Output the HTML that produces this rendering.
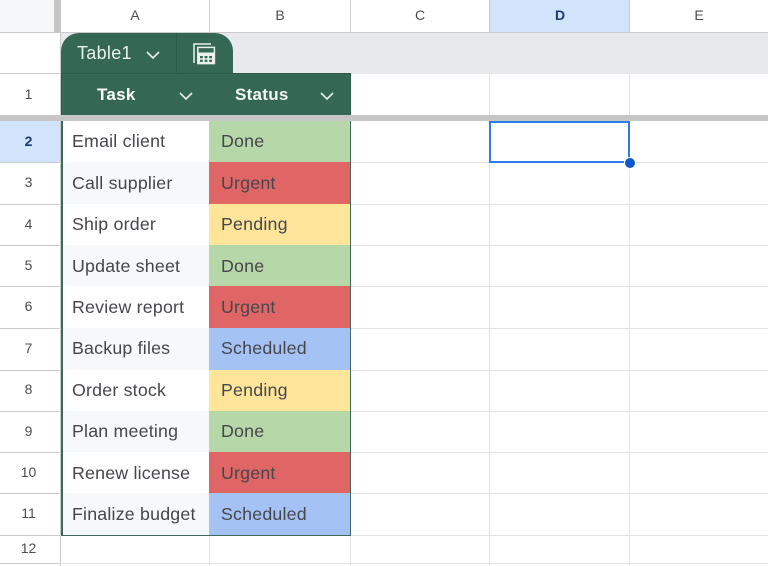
<!DOCTYPE html>
<html><head><meta charset="utf-8">
<style>
html,body{margin:0;padding:0;background:#fff}
#p{position:relative;width:768px;height:566px;overflow:hidden;background:#fff;font-family:"Liberation Sans",sans-serif;color:#444;filter:blur(.3px)}
#p div{position:absolute;box-sizing:border-box}
.t{white-space:nowrap;font-size:17.8px;letter-spacing:.2px;line-height:20px;color:#46464c;margin-top:-1px}
.ch{top:7px;width:40px;text-align:center;font-size:14px;line-height:16px;color:#4d4d4d}
.rn{left:0;width:57px;text-align:center;font-size:14px;line-height:16px;color:#4d4d4d;margin-top:-1px}
.h{height:1px;left:0;width:768px;background:#e2e3e3}
.hg{height:1px;left:0;width:60px;background:#c9cacb}
.v{width:1px;background:#e2e3e3}
.c{left:209px;width:141px}
.a{left:62px;width:147px}
.b{font-weight:bold;font-size:17px;letter-spacing:.27px;margin-top:0}
</style></head><body><div id="p">
<div style="left:0;top:0;width:54px;height:32px;background:#f6f7f8"></div>
<div style="left:54px;top:0;width:7px;height:32px;background:#c6c6c6"></div>
<div style="left:490px;top:0;width:139px;height:32px;background:#d2e3fc"></div>
<div style="left:0;top:32px;width:768px;height:1px;background:#c9cacb"></div>
<div class="v" style="left:209px;top:0;height:32px;background:#d0d1d2"></div>
<div class="v" style="left:350px;top:0;height:32px;background:#d0d1d2"></div>
<div class="v" style="left:489px;top:0;height:32px;background:#c6c8cc"></div>
<div class="v" style="left:629px;top:0;height:32px;background:#c6c8cc"></div>
<div class="ch" style="left:115px">A</div>
<div class="ch" style="left:260px">B</div>
<div class="ch" style="left:400px">C</div>
<div class="ch" style="left:540px;color:#1f3a70;font-weight:bold">D</div>
<div class="ch" style="left:679px">E</div>

<div style="left:61px;top:33px;width:707px;height:41px;background:#e8e9ec"></div>
<div class="v" style="left:60px;top:33px;height:533px;background:#c9cacb"></div>
<div class="hg" style="top:73px"></div>

<div class="v" style="left:350px;top:74px;height:492px"></div>
<div class="v" style="left:489px;top:74px;height:492px"></div>
<div class="v" style="left:629px;top:74px;height:492px"></div>
<div class="v" style="left:209px;top:535px;height:31px"></div>

<div class="h" style="top:162px"></div><div class="h" style="top:203.5px"></div><div class="h" style="top:244.5px"></div>
<div class="h" style="top:286px"></div><div class="h" style="top:327.5px"></div><div class="h" style="top:369.5px"></div>
<div class="h" style="top:410.5px"></div><div class="h" style="top:452px"></div><div class="h" style="top:493px"></div>
<div class="h" style="top:535px"></div><div class="h" style="top:563px"></div>
<div class="hg" style="top:162px"></div><div class="hg" style="top:203.5px"></div><div class="hg" style="top:244.5px"></div>
<div class="hg" style="top:286px"></div><div class="hg" style="top:327.5px"></div><div class="hg" style="top:369.5px"></div>
<div class="hg" style="top:410.5px"></div><div class="hg" style="top:452px"></div><div class="hg" style="top:493px"></div>
<div class="hg" style="top:535px"></div><div class="hg" style="top:563px"></div>

<div style="left:0;top:121px;width:60px;height:41px;background:#d2e3fc"></div>

<div style="left:61px;top:33px;width:172px;height:41px;background:#356854;border-radius:18px 18px 0 0"></div>
<div style="left:176px;top:33px;width:1px;height:41px;background:#2c5a47"></div>
<div class="t" style="left:77px;top:43px;color:#e9f0ed;font-size:18px;letter-spacing:.3px;margin-top:0">Table1</div>
<svg style="position:absolute;left:145px;top:50px" width="16" height="10" viewBox="0 0 16 10"><path d="M2 2l6 6 6-6" fill="none" stroke="#e9f0ed" stroke-width="1.6"/></svg>
<svg style="position:absolute;left:192px;top:42px" width="26" height="24" viewBox="0 0 26 24"><path d="M2 21V2h17" fill="none" stroke="#e9f0ed" stroke-width="1.5"/><rect x="5.8" y="5.4" width="16.6" height="16.2" fill="none" stroke="#e9f0ed" stroke-width="1.5"/><rect x="6" y="10.5" width="16" height="11" fill="#e9f0ed"/><path d="M8 14h2.8v2.2h-2.8zM12.6 14h2.8v2.2h-2.8zM17.2 14h2.8v2.2h-2.8zM8 17.7h2.8v2.2h-2.8zM12.6 17.7h2.8v2.2h-2.8zM17.2 17.7h2.8v2.2h-2.8z" fill="#356854"/></svg>

<div style="left:61px;top:73px;width:290px;height:43px;background:#356854;border:1px solid #2c5a47"></div>
<div class="t b" style="left:97px;top:85px;color:#fff">Task</div>
<div class="t b" style="left:235px;top:85px;color:#f2f6f4">Status</div>
<svg style="position:absolute;left:178px;top:91px" width="16" height="10" viewBox="0 0 16 10"><path d="M2 2l6 6 6-6" fill="none" stroke="#e9f0ed" stroke-width="1.6"/></svg>
<svg style="position:absolute;left:319px;top:91px" width="16" height="10" viewBox="0 0 16 10"><path d="M2 2l6 6 6-6" fill="none" stroke="#e9f0ed" stroke-width="1.6"/></svg>

<div style="left:0;top:115px;width:768px;height:6px;background:#c6c6c6"></div>

<div class="a" style="top:121px;height:41px;background:#fff"></div>
<div class="a" style="top:162px;height:42px;background:#f6f8f9"></div>
<div class="a" style="top:204px;height:41px;background:#fff"></div>
<div class="a" style="top:245px;height:41px;background:#f6f8f9"></div>
<div class="a" style="top:286px;height:42px;background:#fff"></div>
<div class="a" style="top:328px;height:42px;background:#f6f8f9"></div>
<div class="a" style="top:370px;height:41px;background:#fff"></div>
<div class="a" style="top:411px;height:41px;background:#f6f8f9"></div>
<div class="a" style="top:452px;height:41px;background:#fff"></div>
<div class="a" style="top:493px;height:42px;background:#f6f8f9"></div>

<div class="c" style="top:121px;height:41px;background:#b6d7a8"></div>
<div class="c" style="top:162px;height:42px;background:#e06666"></div>
<div class="c" style="top:204px;height:41px;background:#ffe599"></div>
<div class="c" style="top:245px;height:41px;background:#b6d7a8"></div>
<div class="c" style="top:286px;height:42px;background:#e06666"></div>
<div class="c" style="top:328px;height:42px;background:#a4c2f4"></div>
<div class="c" style="top:370px;height:41px;background:#ffe599"></div>
<div class="c" style="top:411px;height:41px;background:#b6d7a8"></div>
<div class="c" style="top:452px;height:41px;background:#e06666"></div>
<div class="c" style="top:493px;height:42px;background:#a4c2f4"></div>

<div style="left:61px;top:121px;width:290px;height:415px;border:1px solid #3d6a57;border-top:0;border-left-width:2px;border-right-width:1.5px"></div>

<div class="rn" style="top:87px">1</div>
<div class="rn" style="top:134px;color:#1f3a70;font-weight:bold">2</div>
<div class="rn" style="top:175px">3</div>
<div class="rn" style="top:217px">4</div>
<div class="rn" style="top:258px">5</div>
<div class="rn" style="top:299px">6</div>
<div class="rn" style="top:341px">7</div>
<div class="rn" style="top:382px">8</div>
<div class="rn" style="top:424px">9</div>
<div class="rn" style="top:465px">10</div>
<div class="rn" style="top:506px">11</div>
<div class="rn" style="top:541px">12</div>

<div class="t" style="left:72px;top:132px">Email client</div>
<div class="t" style="left:72px;top:174px">Call supplier</div>
<div class="t" style="left:72px;top:215px">Ship order</div>
<div class="t" style="left:72px;top:257px">Update sheet</div>
<div class="t" style="left:72px;top:298px">Review report</div>
<div class="t" style="left:72px;top:339px">Backup files</div>
<div class="t" style="left:72px;top:381px">Order stock</div>
<div class="t" style="left:72px;top:422px">Plan meeting</div>
<div class="t" style="left:72px;top:464px">Renew license</div>
<div class="t" style="left:72px;top:505px">Finalize budget</div>

<div class="t" style="left:221px;top:132px">Done</div>
<div class="t" style="left:221px;top:174px">Urgent</div>
<div class="t" style="left:221px;top:215px">Pending</div>
<div class="t" style="left:221px;top:257px">Done</div>
<div class="t" style="left:221px;top:298px">Urgent</div>
<div class="t" style="left:221px;top:339px">Scheduled</div>
<div class="t" style="left:221px;top:381px">Pending</div>
<div class="t" style="left:221px;top:422px">Done</div>
<div class="t" style="left:221px;top:464px">Urgent</div>
<div class="t" style="left:221px;top:505px">Scheduled</div>

<div style="left:489px;top:121px;width:141px;height:42px;border:2px solid #2b7de9"></div>
<div style="left:624px;top:157px;width:12px;height:12px;border-radius:50%;background:#0b57d0;border:1px solid #fff"></div>
</div></body></html>
